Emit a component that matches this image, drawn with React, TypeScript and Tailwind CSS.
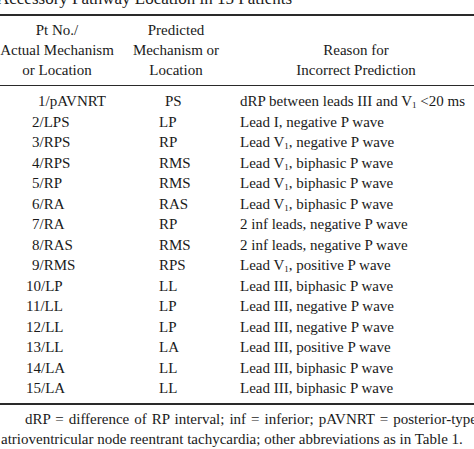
const rows: { pt: string; pad: string; pred: string; predPad: string; reason: React.ReactNode }[] = [
  { pt: '1/pAVNRT', pad: 'pl-[38px]', pred: 'PS', predPad: 'pl-[51px]', reason: <>dRP between leads III and V<sub className="text-[9px]">1</sub> &lt;20 ms</> },
  { pt: '2/LPS', pad: 'pl-[32px]', pred: 'LP', predPad: 'pl-[45px]', reason: 'Lead I, negative P wave' },
  { pt: '3/RPS', pad: 'pl-[32px]', pred: 'RP', predPad: 'pl-[45px]', reason: <>Lead V<sub className="text-[9px]">1</sub>, negative P wave</> },
  { pt: '4/RPS', pad: 'pl-[32px]', pred: 'RMS', predPad: 'pl-[45px]', reason: <>Lead V<sub className="text-[9px]">1</sub>, biphasic P wave</> },
  { pt: '5/RP', pad: 'pl-[32px]', pred: 'RMS', predPad: 'pl-[45px]', reason: <>Lead V<sub className="text-[9px]">1</sub>, biphasic P wave</> },
  { pt: '6/RA', pad: 'pl-[32px]', pred: 'RAS', predPad: 'pl-[45px]', reason: <>Lead V<sub className="text-[9px]">1</sub>, biphasic P wave</> },
  { pt: '7/RA', pad: 'pl-[32px]', pred: 'RP', predPad: 'pl-[45px]', reason: '2 inf leads, negative P wave' },
  { pt: '8/RAS', pad: 'pl-[32px]', pred: 'RMS', predPad: 'pl-[45px]', reason: '2 inf leads, negative P wave' },
  { pt: '9/RMS', pad: 'pl-[32px]', pred: 'RPS', predPad: 'pl-[45px]', reason: <>Lead V<sub className="text-[9px]">1</sub>, positive P wave</> },
  { pt: '10/LP', pad: 'pl-[26px]', pred: 'LL', predPad: 'pl-[45px]', reason: 'Lead III, biphasic P wave' },
  { pt: '11/LL', pad: 'pl-[26px]', pred: 'LP', predPad: 'pl-[45px]', reason: 'Lead III, negative P wave' },
  { pt: '12/LL', pad: 'pl-[26px]', pred: 'LP', predPad: 'pl-[45px]', reason: 'Lead III, negative P wave' },
  { pt: '13/LL', pad: 'pl-[26px]', pred: 'LA', predPad: 'pl-[45px]', reason: 'Lead III, positive P wave' },
  { pt: '14/LA', pad: 'pl-[26px]', pred: 'LL', predPad: 'pl-[45px]', reason: 'Lead III, biphasic P wave' },
  { pt: '15/LA', pad: 'pl-[26px]', pred: 'LL', predPad: 'pl-[45px]', reason: 'Lead III, biphasic P wave' },
]

export default function App() {
  return (
    <div className="w-[474px] h-[449px] overflow-hidden bg-white text-[#1a1a1a] text-[15px] font-['Liberation_Serif',serif]">
      {/* table title, cut off by the crop */}
      <div className="h-[14px] overflow-hidden">
        <div className="-mt-[11px] -ml-[3px] text-[17px] leading-[20px] whitespace-nowrap">
          Accessory Pathway Location in 15 Patients
        </div>
      </div>
      <div className="h-[2px] bg-[#2a2a2a]" />

      {/* header */}
      <div className="grid grid-cols-[114px_124px_1fr] pt-[4px] pb-[5px] leading-[20px] text-center">
        <div>Pt No./<br />Actual Mechanism<br />or Location</div>
        <div>Predicted<br />Mechanism or<br />Location</div>
        <div className="flex flex-col justify-end">Reason for<br />Incorrect Prediction</div>
      </div>
      <div className="h-px bg-[#2a2a2a]" />

      {/* body */}
      <div className="pt-[5px] pb-[4px] leading-[20.5px]">
        {rows.map((r) => (
          <div key={r.pt} className="grid grid-cols-[114px_124px_1fr] whitespace-nowrap">
            <div className={r.pad}>{r.pt}</div>
            <div className={r.predPad}>{r.pred}</div>
            <div className="pl-[2px]">{r.reason}</div>
          </div>
        ))}
      </div>
      <div className="h-[2px] bg-[#2a2a2a]" />

      {/* footnote */}
      <div className="pt-[4px] leading-[20px]">
        <div className="w-[477px] pl-[25px] text-justify [text-align-last:justify]">
          dRP = difference of RP interval; inf = inferior; pAVNRT = posterior-type
        </div>
        <div className="pl-[1px] whitespace-nowrap">
          atrioventricular node reentrant tachycardia; other abbreviations as in Table 1.
        </div>
      </div>
    </div>
  )
}
